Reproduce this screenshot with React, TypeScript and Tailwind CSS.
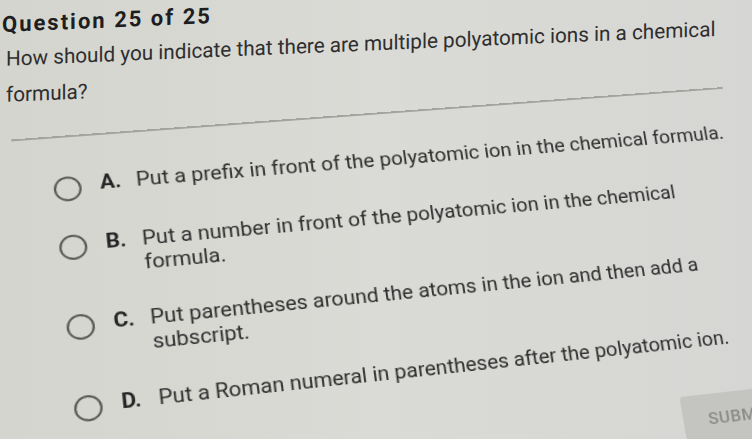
const options = [
  { letter: "A.", text: "Put a prefix in front of the polyatomic ion in the chemical formula." },
  { letter: "B.", text: "Put a number in front of the polyatomic ion in the chemical formula." },
  { letter: "C.", text: "Put parentheses around the atoms in the ion and then add a subscript." },
  { letter: "D.", text: "Put a Roman numeral in parentheses after the polyatomic ion." },
];

function OptionRow({ letter, text }: { letter: string; text: string }) {
  return (
    <div className="flex items-start pl-[61px]">
      <span className="mt-[3.5px] size-[25px] shrink-0 rounded-full border-2 border-[#585856]" />
      <span className="ml-[17px] w-[33px] shrink-0 text-[20px] font-bold leading-[24px] text-[#242424]">
        {letter}
      </span>
      <p className="w-[590px] text-[20px] leading-[24px] text-[#2e2e2e]">{text}</p>
    </div>
  );
}

export default function App() {
  return (
    <div className="relative h-[439px] w-[752px] overflow-hidden bg-gradient-to-r from-[#d5d5cf] via-[#dadad6] to-[#d6d7d4] font-[Roboto,sans-serif]">
      {/* header: the photo is tilted, so the block is skewed */}
      <div className="h-[130px] origin-top-left skew-y-[-2.4deg] pt-[12px]">
        <h1 className="pl-[2px] text-[22px] font-bold leading-[26px] tracking-[2px] text-[#1e1e1e]">
          Question 25 of 25
        </h1>
        <p className="mt-[2.5px] pl-[6px] pr-[2px] text-[20.7px] leading-[36px] text-[#2e2e2e]">
          How should you indicate that there are multiple polyatomic ions in a chemical formula?
        </p>
      </div>

      {/* answers, with the camera's perspective */}
      <div className="h-[309px] origin-top-left [transform:matrix3d(1.119263,-0.081146,0,0.00013161,0.084071,0.977622,0,-0.00012909,0,0,1,0,-18.86675,11.71562,0,1)]">
        <div className="ml-[27px] h-[2px] w-[697px] bg-[#a3a39f]" />
        <div className="mt-[36px] flex flex-col gap-[31px]">
          {options.map((o) => (
            <OptionRow key={o.letter} letter={o.letter} text={o.text} />
          ))}
        </div>
        <div className="ml-[624px] mt-[40px] flex h-[52px] w-[150px] items-center rounded-[4px] bg-[#c4c4c1] pl-[25px]">
          <span className="whitespace-nowrap text-[17px] font-medium tracking-[0.5px] text-[#8b8b89]">
            SUBMIT
          </span>
        </div>
      </div>
    </div>
  );
}
